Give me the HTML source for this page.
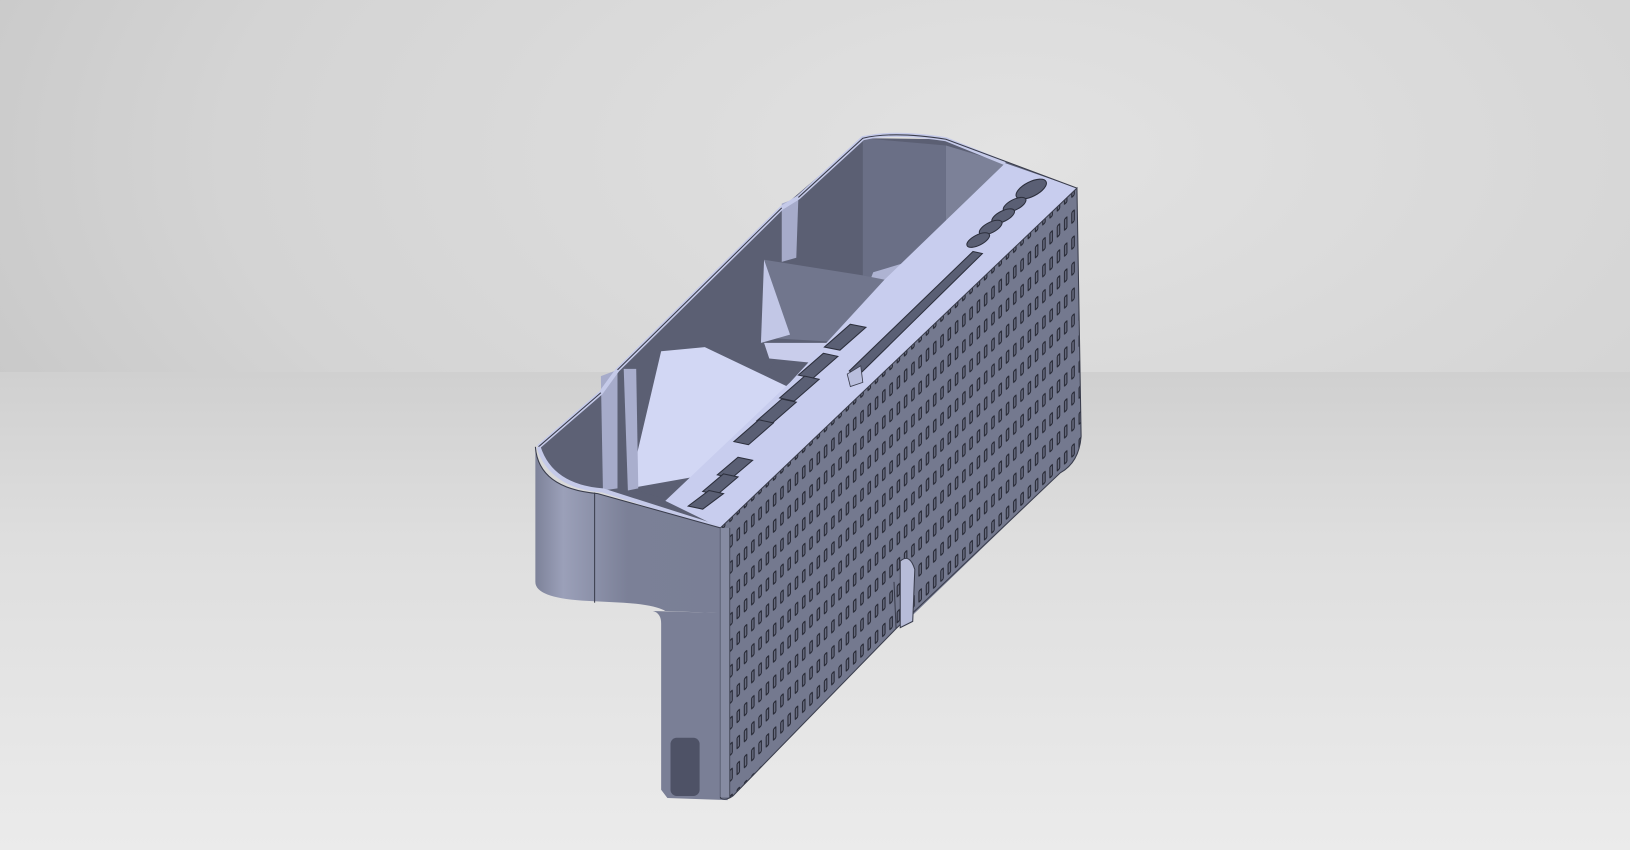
<!DOCTYPE html>
<html><head><meta charset="utf-8"><style>
html,body{margin:0;padding:0;width:1630px;height:850px;overflow:hidden;background:#ddd}
svg{display:block}
</style></head><body>
<svg width="1630" height="850" viewBox="0 0 1568 818" preserveAspectRatio="none" xmlns="http://www.w3.org/2000/svg">
<defs>
<radialGradient id="bg" cx="0.62" cy="0.18" r="0.8">
<stop offset="0" stop-color="#e2e2e2"/><stop offset="0.6" stop-color="#d4d4d4"/><stop offset="1" stop-color="#c2c2c2"/>
</radialGradient>
<linearGradient id="floor" x1="0" y1="0" x2="0" y2="1">
<stop offset="0" stop-color="#d0d0d0"/><stop offset="0.35" stop-color="#dedede"/><stop offset="1" stop-color="#ebebeb"/>
</linearGradient>
<linearGradient id="endw" x1="0" y1="0" x2="1" y2="0">
<stop offset="0" stop-color="#7d8299"/><stop offset="0.15" stop-color="#9ba0b9"/><stop offset="0.5" stop-color="#7b8097"/><stop offset="1" stop-color="#7a7f96"/>
</linearGradient>
<pattern id="holes" width="7" height="25" patternUnits="userSpaceOnUse" patternTransform="skewY(-43.5)">
<rect width="7" height="25" fill="#74798f"/>
<rect x="1.5" y="7" width="3.4" height="12" rx="1.5" fill="#262834"/>
<rect x="2.5" y="8.5" width="1.4" height="9" fill="#686c80"/>
</pattern>
</defs>
<rect width="1568" height="818" fill="url(#bg)"/>
<rect y="358" width="1568" height="460" fill="url(#floor)"/>

<!-- base interior fill -->
<polygon points="518,430 578,378 752,200 830,133 910,134 1036,181 693,508 580,472" fill="#5b5f73"/>
<path d="M518,430 L578,378 L580,472 Q530,465 518,430 Z" fill="#5d6175"/>
<polygon points="590,360 752,200 762,196 830,133 910,140 910,290 760,330 640,480 605,470" fill="#5b5f73"/>
<polygon points="830,133 910,140 910,260 850,270 830,265" fill="#6a6f86"/>
<polygon points="910,140 967,157 870,262 910,258" fill="#7c8198"/>
<polygon points="840,262 880,250 870,275 835,275" fill="#aeb3d2"/>
<polygon points="735,250 830,265 855,270 820,330 735,325" fill="#71768d"/>
<polygon points="735,250 732,330 760,322" fill="#c2c7e6"/>
<polygon points="735,330 800,330 790,350 740,345" fill="#c9cdeb"/>
<polygon points="636,338 678,334 770,378 690,455 605,470" fill="#d2d7f4"/>
<polygon points="600,355 612,355 614,470 604,472" fill="#a9aecd"/>
<polygon points="752,196 768,190 766,248 752,252" fill="#a6abca"/>
<polygon points="578,362 594,356 594,470 580,472" fill="#a6abca"/>

<polygon points="967,157 1036,181 693,508 640,482 760,368 851,269" fill="#c8cdee"/>
<path d="M518,430 L578,378 L594,356 L752,200 L768,190 L830,133 Q860,126 910,134 L967,157" fill="none" stroke="#c5cae9" stroke-width="4"/>
<path d="M518,430 L578,378 M594,356 L752,200 M768,190 L830,133 Q860,126 910,134 L1036,181" fill="none" stroke="#3a3d4c" stroke-width="1"/>
<path d="M518,430 Q530,468 580,472 L693,508" fill="none" stroke="#c5cae9" stroke-width="4"/>

<g fill="#5a5f74" stroke="#2c2f3c" stroke-width="1">
<ellipse cx="992" cy="182" rx="16" ry="7" transform="rotate(-27 992 182)"/>
<ellipse cx="976" cy="197" rx="12" ry="5" transform="rotate(-27 976 197)"/>
<ellipse cx="965" cy="208" rx="12" ry="5" transform="rotate(-27 965 208)"/>
<ellipse cx="953" cy="219" rx="12" ry="5" transform="rotate(-27 953 219)"/>
<ellipse cx="941" cy="231" rx="12" ry="5" transform="rotate(-27 941 231)"/>
<polygon points="936,242 945,244 825,362 817,357"/>
<polygon points="818,312 833,315 808,337 793,334"/>
<polygon points="792,340 806,343 782,364 768,361"/>
<polygon points="774,362 788,365 764,386 750,383"/>
<polygon points="752,384 766,387 742,408 728,405"/>
<polygon points="730,404 744,407 720,428 706,425"/>
<polygon points="710,440 724,443 704,460 690,457"/>
<polygon points="696,456 710,459 690,476 676,473"/>
<polygon points="682,472 696,475 676,490 662,487"/>
</g>
<polygon points="815,360 828,352 830,368 818,372" fill="#b9bedd" stroke="#3a3d4c" stroke-width="0.8"/>

<path d="M515,430 Q518,470 575,475 L693,508 L693,590 L640,588 Q630,582 600,580 L560,578 Q515,575 515,560 Z" fill="url(#endw)"/>
<line x1="572" y1="474" x2="572" y2="580" stroke="#3a3d4c" stroke-width="1"/>
<path d="M515,430 Q518,470 575,475 L693,508" fill="none" stroke="#3a3d4c" stroke-width="1"/>
<path d="M628,588 Q636,590 636,600 L636,760 L642,768 L700,770 L700,590 Z" fill="#7a7f96"/>
<rect x="645" y="710" width="28" height="56" rx="6" fill="#4e5266"/>

<path d="M693,508 L1036,181 L1040,420 Q1038,445 1020,455 L878,592 L862,605 L705,766 Q698,771 693,768 Z" fill="url(#holes)"/>
<path d="M693,508 L1036,181 L1040,420 Q1038,445 1020,455 L862,605 L705,766 Q698,771 693,768 Z" fill="none" stroke="#3a3d4c" stroke-width="1"/>
<rect x="693" y="508" width="9" height="259" fill="#868ba2"/>
<line x1="702" y1="508" x2="702" y2="767" stroke="#3a3d4c" stroke-width="0.8"/>
<path d="M866,540 Q875,532 880,548 L878,598 L866,604 Z" fill="#b7bcd8" stroke="#3a3d4c" stroke-width="1"/>
<path d="M860,560 L862,605" stroke="#3a3d4c" stroke-width="1"/>
</svg>
</body></html>
